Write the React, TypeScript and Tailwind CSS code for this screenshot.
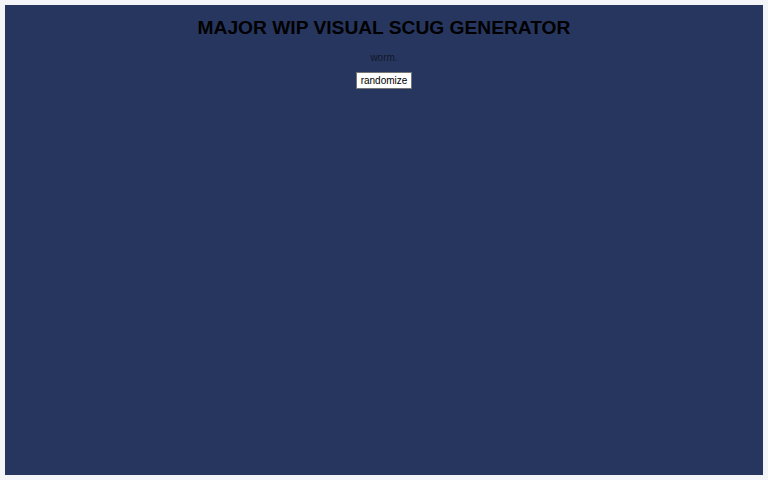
export default function App() {
  return (
    <div className="h-[480px] w-[768px] bg-[#f4f5f9] p-[5px] font-['Liberation_Sans',Arial,sans-serif]">
      <div className="flex h-[470px] flex-col items-center bg-[#27365f] text-black">
        <h1 className="mt-[11px] text-[19.2px] font-bold leading-[24px]">
          MAJOR WIP VISUAL SCUG GENERATOR
        </h1>
        <p className="mt-[12px] text-[10px] leading-[12px] text-[#111827]">worm.</p>
        <button className="mt-[8px] h-[17px] border border-[#767676] bg-white px-[4px] text-[10px] leading-[15px] text-black">
          randomize
        </button>
      </div>
    </div>
  );
}
